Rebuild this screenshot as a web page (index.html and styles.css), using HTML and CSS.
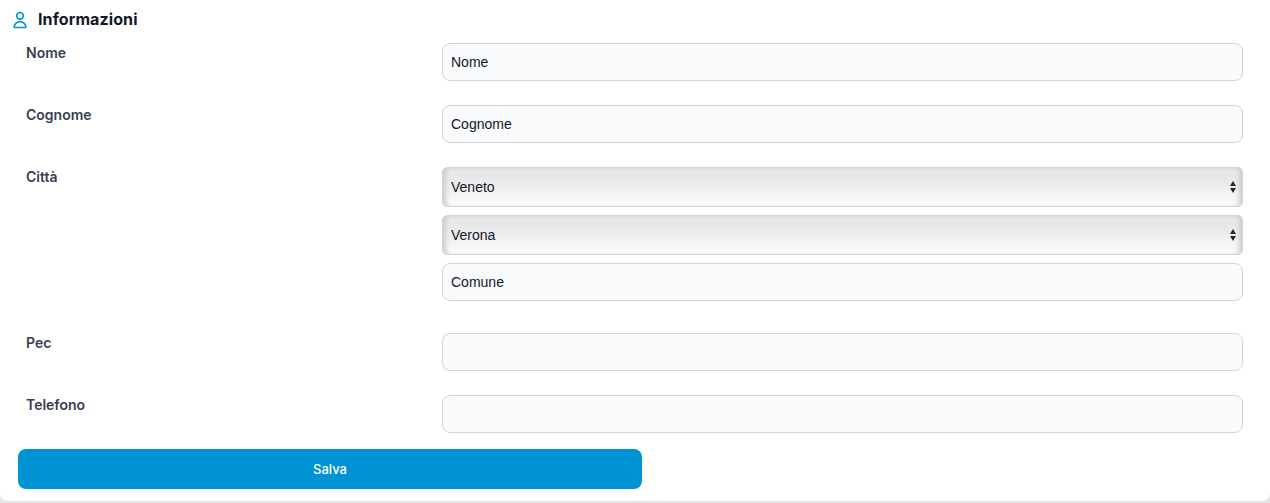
FILE: index.html
```html
<!DOCTYPE html>
<html lang="it">

<head>
    <meta charset="UTF-8">
    <meta name="viewport" content="width=device-width, initial-scale=1.0">
    <title>Informazioni</title>
    <link rel="stylesheet" href="styles.css">
</head>

<body>

    <form class="card">
        <h2 class="card-title">
            <svg class="icon-user" viewBox="0 0 24 24" fill="none" stroke="#0093d3" stroke-width="2" stroke-linecap="round" stroke-linejoin="round">
                <path d="M16 7a4 4 0 1 1-8 0 4 4 0 0 1 8 0z"></path>
                <path d="M12 14a7 7 0 0 0-7 7h14a7 7 0 0 0-7-7z"></path>
            </svg>
            <span class="card-title-text">Informazioni</span>
        </h2>

        <div class="row">
            <label class="row-label">Nome</label>
            <div class="row-fields">
                <input class="field" type="text" value="Nome">
            </div>
        </div>

        <div class="row">
            <label class="row-label">Cognome</label>
            <div class="row-fields">
                <input class="field" type="text" value="Cognome">
            </div>
        </div>

        <div class="row row-city">
            <label class="row-label">Città</label>
            <div class="row-fields">
                <div class="select-box">
                    <select class="select">
                        <option>Veneto</option>
                    </select>
                    <svg class="select-arrows" viewBox="0 0 6 12"><path d="M3 0l3 5H0zM3 12L0 7h6z"></path></svg>
                </div>
                <div class="select-box">
                    <select class="select">
                        <option>Verona</option>
                    </select>
                    <svg class="select-arrows" viewBox="0 0 6 12"><path d="M3 0l3 5H0zM3 12L0 7h6z"></path></svg>
                </div>
                <input class="field" type="text" value="Comune">
            </div>
        </div>

        <div class="row">
            <label class="row-label">Pec</label>
            <div class="row-fields">
                <input class="field" type="text">
            </div>
        </div>

        <div class="row row-last">
            <label class="row-label">Telefono</label>
            <div class="row-fields">
                <input class="field" type="text">
            </div>
        </div>

        <button class="btn-save" type="button">Salva</button>
    </form>

</body>

</html>
```

FILE: styles.css
```css
* {
    margin: 0;
    padding: 0;
    box-sizing: border-box;
}

html {
    background: #e5e5e5;
}

body {
    height: 501px;
    background: white;
    border-radius: 0 0 8px 8px;
    overflow: hidden;
    font-family: "Liberation Sans", Arial, sans-serif;
}

.card {
    padding: 10px 27px 0 18px;
}

.card-title {
    display: flex;
    align-items: center;
    gap: 8px;
    height: 20px;
    margin-left: -8px;
    margin-bottom: 13px;
    font-family: Inter, sans-serif;
    font-size: 16px;
    font-weight: 700;
    letter-spacing: 0.1px;
    color: #111827;
}

.card-title-text {
    padding-bottom: 2px;
}

.icon-user {
    width: 20px;
    height: 20px;
    flex: none;
}

.row {
    display: flex;
    margin-bottom: 24px;
}

.row-city {
    margin-bottom: 32px;
}

.row-last {
    margin-bottom: 16px;
}

.row-label {
    width: 424px;
    padding-left: 8px;
    font-family: Inter, sans-serif;
    font-size: 14px;
    font-weight: 600;
    line-height: 20px;
    color: #374151;
}

.row-fields {
    flex: 1;
    display: flex;
    flex-direction: column;
    gap: 8px;
}

.field {
    display: block;
    width: 100%;
    height: 38px;
    padding: 0 8px;
    font-family: "Liberation Sans", Arial, sans-serif;
    font-size: 14px;
    color: #111827;
    background: #f9fafb;
    border: 1px solid #d1d5db;
    border-radius: 8px;
    outline: none;
}

.select-box {
    position: relative;
    height: 40px;
}

.select {
    display: block;
    width: 100%;
    height: 100%;
    padding: 0 8px;
    font-family: "Liberation Sans", Arial, sans-serif;
    font-size: 14px;
    color: #111827;
    appearance: none;
    background: linear-gradient(#e4e4e4, #ececec 45%, #fcfcfc);
    border: 1px solid #d1d5db;
    border-radius: 5px;
    box-shadow: inset 5px 0 4px -2px #cfcfcf, inset -5px 0 4px -2px #cfcfcf;
    outline: none;
}

.select-arrows {
    position: absolute;
    top: 14px;
    right: 7px;
    width: 6px;
    height: 12px;
    fill: #1f2937;
}

.btn-save {
    display: block;
    width: 624px;
    height: 40px;
    font-family: Inter, sans-serif;
    font-size: 13px;
    font-weight: 500;
    color: white;
    background: #0093d3;
    border: none;
    border-radius: 8px;
    cursor: pointer;
}
```
